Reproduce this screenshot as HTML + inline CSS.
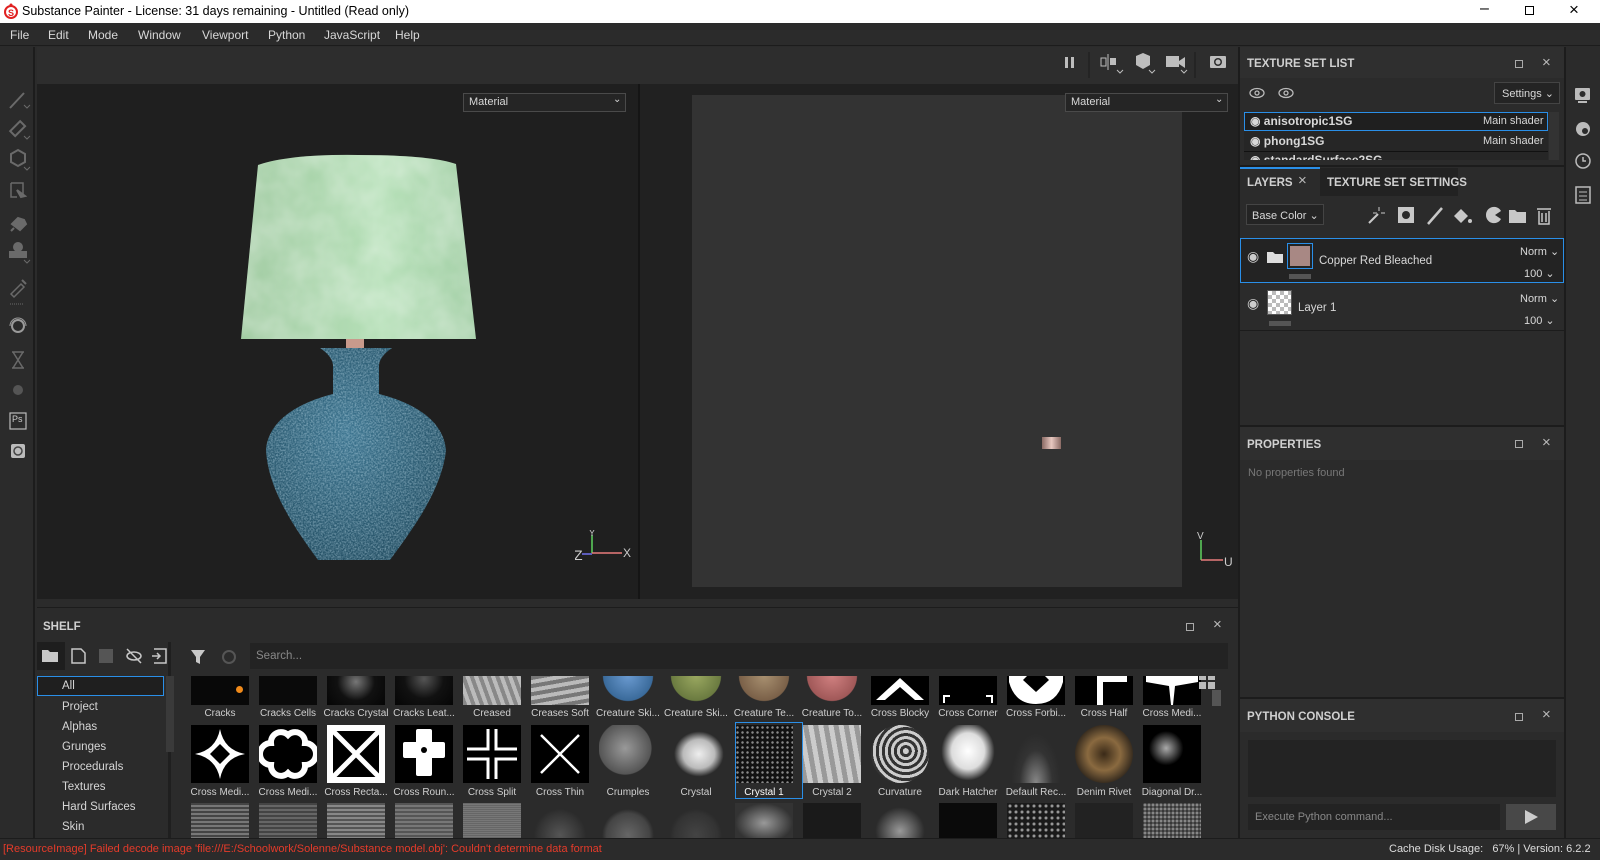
<!DOCTYPE html>
<html><head><meta charset="utf-8"><style>
*{margin:0;padding:0;box-sizing:border-box}
body{width:1600px;height:860px;overflow:hidden;background:#2b2b2b;font-family:"Liberation Sans",sans-serif;font-size:12px;color:#d8d8d8;position:relative}
.a{position:absolute}
.t{position:absolute;white-space:nowrap}
.hdr{font-weight:bold;color:#d0d0d0;font-size:11.5px}
.th{position:absolute;width:58px;overflow:hidden}
.lbl{position:absolute;width:68px;text-align:center;font-size:10px;color:#cfcfcf;white-space:nowrap;overflow:hidden}
.cat{position:absolute;left:62px;font-size:11.5px;color:#d6d6d6}
</style></head><body>
<!-- title bar -->
<div class="a" style="left:0;top:0;width:1600px;height:23px;background:#fff"></div>
<svg class="a" style="left:3px;top:3px" width="16" height="16"><circle cx="8" cy="9" r="6" fill="none" stroke="#e02020" stroke-width="2"/><text x="8" y="13" font-size="9" font-weight="bold" fill="#e02020" text-anchor="middle" font-family="Liberation Sans">S</text><circle cx="8" cy="2" r="1.5" fill="#e02020"/></svg>
<div class="t" style="left:22px;top:4px;color:#000;font-size:12.5px">Substance Painter - License: 31 days remaining - Untitled (Read only)</div>
<div class="t" style="left:1480px;top:0px;color:#000;font-size:16px">&#8211;</div>
<div class="a" style="left:1525px;top:6px;width:9px;height:9px;border:1px solid #000"></div>
<div class="t" style="left:1569px;top:0px;color:#000;font-size:17px">&#215;</div>
<!-- menu -->
<div class="a" style="left:0;top:23px;width:1600px;height:23px;background:#2b2b2b;border-bottom:1px solid #1c1c1c"></div>
<div class="t" style="left:10px;top:28px">File</div><div class="t" style="left:48px;top:28px">Edit</div><div class="t" style="left:88px;top:28px">Mode</div><div class="t" style="left:138px;top:28px">Window</div><div class="t" style="left:202px;top:28px">Viewport</div><div class="t" style="left:268px;top:28px">Python</div><div class="t" style="left:324px;top:28px">JavaScript</div><div class="t" style="left:395px;top:28px">Help</div>
<!-- left toolbar -->
<div class="a" style="left:0;top:47px;width:35px;height:791px;background:#2b2b2b;border-right:2px solid #1c1c1c"></div>
<svg class="a" style="left:0;top:47px" width="35" height="430" fill="none" stroke="#6a6a6a" stroke-width="2">
<line x1="10" y1="61" x2="24" y2="46"/><path d="M24 58l3 3 3-3" stroke-width="1"/>
<rect x="11" y="78" width="14" height="7" transform="rotate(-45 18 82)"/><path d="M24 89l3 3 3-3" stroke-width="1"/>
<path d="M11 107l7-4 7 4v8l-7 4-7-4z"/><path d="M24 120l3 3 3-3" stroke-width="1"/>
<path d="M11 136h12v12M11 136v14h6" stroke-width="1.5"/><path d="M17 143l8 6-4 1z" fill="#6a6a6a"/>
<path d="M12 177l6-6 6 2 2 4-6 6z" fill="#6a6a6a"/><line x1="11" y1="184" x2="14" y2="181"/>
<circle cx="18" cy="200" r="4" fill="#6a6a6a"/><rect x="10" y="205" width="16" height="5" fill="#6a6a6a"/><path d="M24 213l3 3 3-3" stroke-width="1"/>
<path d="M11 247l10-10 3 3-10 10z" stroke-width="1.5"/><line x1="22" y1="233" x2="26" y2="237"/>
<line x1="10" y1="257" x2="24" y2="257" stroke-width="1" stroke-dasharray="1 1"/>
<circle cx="18" cy="279" r="6" stroke="#9a9a9a"/><path d="M10 279a8 8 0 0 1 16 0" stroke="#9a9a9a" stroke-width="1"/>
<path d="M12 305h12M12 321h12M13 305l10 16M23 305l-10 16" stroke-width="1.5"/>
<circle cx="18" cy="343" r="5" fill="#555" stroke="none"/>
<rect x="10" y="366" width="16" height="16" stroke="#bbb" stroke-width="1.2"/>
<rect x="11" y="397" width="14" height="14" rx="2" fill="#bbb" stroke="none"/><circle cx="18" cy="404" r="4" stroke="#444" stroke-width="1.5"/>
</svg>
<div class="t" style="left:12px;top:414px;font-size:9px;color:#ccc">Ps</div>
<!-- viewport top bar -->
<div class="a" style="left:37px;top:47px;width:1201px;height:37px;background:#2d2d2d"></div>
<svg class="a" style="left:1055px;top:50px" width="180" height="30" fill="#bdbdbd">
<rect x="10" y="7" width="3" height="11"/><rect x="16" y="7" width="3" height="11"/>
<line x1="34" y1="2" x2="34" y2="28" stroke="#1c1c1c"/>
<rect x="46" y="8" width="5" height="8" fill="none" stroke="#bdbdbd"/><line x1="53" y1="4" x2="53" y2="20" stroke="#bdbdbd"/><rect x="55" y="8" width="6" height="7"/><path d="M62 20l3 3 3-3" fill="none" stroke="#bdbdbd"/>
<path d="M81 6l7-3 7 3v9l-7 4-7-4z"/><path d="M94 20l3 3 3-3" fill="none" stroke="#bdbdbd"/>
<rect x="111" y="6" width="13" height="11"/><path d="M124 11l6-4v11l-6-4z"/><path d="M126 20l3 3 3-3" fill="none" stroke="#bdbdbd"/>
<line x1="140" y1="2" x2="140" y2="28" stroke="#1c1c1c"/>
<rect x="155" y="6" width="16" height="12" rx="1"/><circle cx="163" cy="12" r="4" fill="#2d2d2d"/><circle cx="163" cy="12" r="2.5"/>
</svg>
<!-- 3D viewport -->
<div class="a" style="left:37px;top:84px;width:601px;height:515px;background:#1f1f1f"></div>
<div class="a" style="left:638px;top:84px;width:2px;height:515px;background:#151515"></div>
<div class="a" style="left:640px;top:84px;width:598px;height:515px;background:#212121"></div>
<div class="a" style="left:692px;top:95px;width:490px;height:492px;background:#333"></div>
<div class="a" style="left:1042px;top:437px;width:19px;height:12px;background:linear-gradient(90deg,#8a6a64,#e8c8c0,#8a6a64)"></div>
<div class="a" style="left:463px;top:93px;width:163px;height:19px;border:1px solid #4a4a4a;background:#252525"></div>
<div class="t" style="left:469px;top:96px;font-size:11px">Material</div><div class="t" style="left:613px;top:94px;font-size:10px">&#8964;</div>
<div class="a" style="left:1065px;top:93px;width:163px;height:19px;border:1px solid #4a4a4a;background:#252525"></div>
<div class="t" style="left:1071px;top:96px;font-size:11px">Material</div><div class="t" style="left:1215px;top:94px;font-size:10px">&#8964;</div>
<!-- lamp -->
<svg class="a" style="left:230px;top:150px" width="260" height="420">
<defs>
<filter id="n1"><feTurbulence type="fractalNoise" baseFrequency="0.03" numOctaves="3" seed="3"/><feColorMatrix values="0 0 0 0 1 0 0 0 0 1 0 0 0 0 1 0 0 0 0.5 -0.1"/><feComposite in2="SourceGraphic" operator="in"/></filter>
<filter id="n2"><feTurbulence type="fractalNoise" baseFrequency="0.6" numOctaves="2" seed="5"/><feColorMatrix values="0 0 0 0 0.6 0 0 0 0 0.8 0 0 0 0 0.9 0 0 0 0.9 -0.3"/><feComposite in2="SourceGraphic" operator="in"/></filter>
<linearGradient id="sg" x1="0" x2="1"><stop offset="0" stop-color="#9fcaa0"/><stop offset="0.6" stop-color="#b6e0b8"/><stop offset="1" stop-color="#a3cfa6"/></linearGradient>
<radialGradient id="vg" cx="0.45" cy="0.4" r="0.7"><stop offset="0" stop-color="#3d7590"/><stop offset="1" stop-color="#224c60"/></radialGradient>
</defs>
<path d="M28 15Q60 4 128 5Q200 5 226 14L246 189H11Z" fill="url(#sg)"/>
<path d="M28 15Q60 4 128 5Q200 5 226 14L246 189H11Z" fill="#fff" filter="url(#n1)"/>
<rect x="116" y="189" width="18" height="9" fill="#c89a8c"/>
<path id="vs" d="M90 198H162Q150 206 149 215V244C192 255 214 275 216 300C212 340 182 380 160 410H88C66 380 38 340 36 300C38 275 60 255 103 244V215Q102 206 90 198Z" fill="url(#vg)"/>
<path d="M90 198H162Q150 206 149 215V244C192 255 214 275 216 300C212 340 182 380 160 410H88C66 380 38 340 36 300C38 275 60 255 103 244V215Q102 206 90 198Z" fill="#fff" filter="url(#n2)"/>
</svg>
<!-- axes -->
<svg class="a" style="left:575px;top:530px" width="60" height="40"><line x1="17" y1="23" x2="17" y2="5" stroke="#5fd35f" stroke-width="1.5"/><line x1="17" y1="23" x2="47" y2="23" stroke="#e87c7c" stroke-width="1.5"/><line x1="7" y1="24" x2="17" y2="24" stroke="#7070ee" stroke-width="1.5"/><text x="14" y="6" fill="#ccc" font-size="9">Y</text><text x="48" y="27" fill="#ccc" font-size="12">X</text><text x="-1" y="30" fill="#ccc" font-size="14">Z</text></svg>
<svg class="a" style="left:1196px;top:530px" width="44" height="40"><line x1="5" y1="10" x2="5" y2="30" stroke="#5fd35f" stroke-width="1.5"/><line x1="5" y1="30" x2="27" y2="30" stroke="#e87c7c" stroke-width="1.5"/><text x="1" y="9" fill="#ccc" font-size="10">V</text><text x="28" y="36" fill="#ccc" font-size="12">U</text></svg>
<!-- shelf -->
<div class="a" style="left:37px;top:599px;width:1201px;height:9px;background:#2b2b2b;border-bottom:1px solid #1c1c1c"></div>
<div class="a" style="left:37px;top:609px;width:1201px;height:229px;background:#2b2b2b"></div>
<div class="t hdr" style="left:43px;top:621px">SHELF</div>
<div class="a" style="left:1186px;top:623px;width:8px;height:8px;border:1px solid #aaa"></div>
<div class="t" style="left:1213px;top:616px;font-size:15px;color:#bbb">&#215;</div>
<div class="a" style="left:37px;top:642px;width:130px;height:28px;background:#2b2b2b"></div>
<div class="a" style="left:37px;top:642px;width:28px;height:28px;background:#1e1e1e"></div>
<svg class="a" style="left:37px;top:642px" width="140" height="28" fill="#c8c8c8">
<path d="M5 8h6l2 2h8v10H5z"/>
<path d="M35 7h9l4 4v10H35z" fill="none" stroke="#c8c8c8" stroke-width="1.5"/>
<rect x="62" y="7" width="14" height="14" fill="#555"/>
<ellipse cx="97" cy="14" rx="7" ry="4" fill="none" stroke="#c8c8c8" stroke-width="1.5"/><line x1="90" y1="7" x2="104" y2="21" stroke="#c8c8c8" stroke-width="1.5"/>
<path d="M117 7h12v14h-12M115 14h8M120 11l3 3-3 3" fill="none" stroke="#c8c8c8" stroke-width="1.5"/>
</svg>
<div class="a" style="left:168px;top:642px;width:3px;height:196px;background:#1f1f1f"></div>
<svg class="a" style="left:188px;top:646px" width="60" height="22"><path d="M3 4h14l-5 7v7l-4-2v-5z" fill="#c8c8c8"/><circle cx="41" cy="11" r="6" fill="none" stroke="#555" stroke-width="2"/></svg>
<div class="a" style="left:250px;top:643px;width:978px;height:26px;background:#232323"></div>
<div class="t" style="left:256px;top:650px;color:#888;font-size:11.5px">Search...</div>
<!-- categories -->
<div class="a" style="left:37px;top:676px;width:127px;height:20px;background:#1f1f1f;border:1px solid #2a8fe8"></div>
<div class="a" style="left:166px;top:676px;width:8px;height:76px;background:#3a3a3a"></div>
<div class="cat" style="top:680px">All</div><div class="cat" style="top:701px">Project</div><div class="cat" style="top:721px">Alphas</div><div class="cat" style="top:741px">Grunges</div><div class="cat" style="top:761px">Procedurals</div><div class="cat" style="top:781px">Textures</div><div class="cat" style="top:801px">Hard Surfaces</div><div class="cat" style="top:821px">Skin</div>
<!-- thumbs -->
<div class="a" style="left:182px;top:676px;width:1040px;height:162px;overflow:hidden">
<div class="th" style="left:9px;top:0;height:29px;background:#080808"></div>
<div class="th" style="left:77px;top:0;height:29px;background:#0a0a0a"></div>
<div class="th" style="left:145px;top:0;height:29px;background:radial-gradient(circle at 50% 20%,#777,#111 50%,#050505)"></div>
<div class="th" style="left:213px;top:0;height:29px;background:radial-gradient(circle at 50% 10%,#555,#111 50%,#050505)"></div>
<div class="th" style="left:281px;top:0;height:29px;background:repeating-linear-gradient(70deg,#888 0 4px,#bbb 4px 8px)"></div>
<div class="th" style="left:349px;top:0;height:29px;background:repeating-linear-gradient(170deg,#777 0 4px,#bbb 4px 8px)"></div>
<div class="th" style="left:417px;top:0;height:29px;background:radial-gradient(ellipse at 50% 0%,#6a9ad0,#3a6a9a 60%,#2b2b2b 62%)"></div>
<div class="th" style="left:485px;top:0;height:29px;background:radial-gradient(ellipse at 50% 0%,#9aa860,#6a7a40 60%,#2b2b2b 62%)"></div>
<div class="th" style="left:553px;top:0;height:29px;background:radial-gradient(ellipse at 50% 0%,#a89070,#7a6048 60%,#2b2b2b 62%)"></div>
<div class="th" style="left:621px;top:0;height:29px;background:radial-gradient(ellipse at 50% 0%,#d08080,#a05858 60%,#2b2b2b 62%)"></div>
<div class="th" style="left:689px;top:0;height:29px;background:#000"><svg width="58" height="29"><path d="M5 24L29 2 53 24 44 24 29 11 14 24z" fill="#fff"/></svg></div>
<div class="th" style="left:757px;top:0;height:29px;background:#000"><svg width="58" height="29"><path d="M5 27v-7h6M53 27v-7h-6" stroke="#fff" stroke-width="2" fill="none"/></svg></div>
<div class="th" style="left:825px;top:0;height:29px;background:#000"><svg width="58" height="29"><path d="M2 0h54v6Q50 28 29 28Q8 28 2 6z" fill="#fff"/><path d="M16 4L29 16 42 4 38 0H20z" fill="#000"/></svg></div>
<div class="th" style="left:893px;top:0;height:29px;background:#000"><svg width="58" height="29"><path d="M22 0h30v6H28v23h-6z" fill="#fff"/></svg></div>
<div class="th" style="left:961px;top:0;height:29px;background:#000"><svg width="58" height="29"><path d="M3 0h52v6L32 10 30 29H28L26 10 3 6z" fill="#fff"/></svg></div>
<svg class="a" style="left:1016px;top:-4px" width="18" height="18" fill="#bbb"><rect x="1" y="1" width="7" height="7"/><rect x="10" y="1" width="7" height="7"/><rect x="1" y="10" width="7" height="7"/><rect x="10" y="10" width="7" height="7"/></svg>
<div class="a" style="left:1030px;top:14px;width:9px;height:16px;background:#555"></div>
<div class="a" style="left:54px;top:10px;width:7px;height:7px;border-radius:50%;background:#f08a1a"></div>
<div class="lbl" style="left:4px;top:32px">Cracks</div><div class="lbl" style="left:72px;top:32px">Cracks Cells</div><div class="lbl" style="left:140px;top:32px">Cracks Crystal</div><div class="lbl" style="left:208px;top:32px">Cracks Leat...</div><div class="lbl" style="left:276px;top:32px">Creased</div><div class="lbl" style="left:344px;top:32px">Creases Soft</div><div class="lbl" style="left:412px;top:32px">Creature Ski...</div><div class="lbl" style="left:480px;top:32px">Creature Ski...</div><div class="lbl" style="left:548px;top:32px">Creature Te...</div><div class="lbl" style="left:616px;top:32px">Creature To...</div><div class="lbl" style="left:684px;top:32px">Cross Blocky</div><div class="lbl" style="left:752px;top:32px">Cross Corner</div><div class="lbl" style="left:820px;top:32px">Cross Forbi...</div><div class="lbl" style="left:888px;top:32px">Cross Half</div><div class="lbl" style="left:956px;top:32px">Cross Medi...</div>
<div class="th" style="left:9px;top:49px;height:58px;background:#000"><svg width="58" height="58"><path d="M29 4Q33 25 54 29Q33 33 29 54Q25 33 4 29Q25 25 29 4z" fill="#fff"/><path d="M29 19L39 29 29 39 19 29z" fill="#000"/></svg></div>
<div class="th" style="left:77px;top:49px;height:58px;background:#000"><svg width="58" height="58"><path d="M29 10a10 10 0 0 1 17 8a10 10 0 0 1 0 22a10 10 0 0 1-17 8a10 10 0 0 1-17-8a10 10 0 0 1 0-22a10 10 0 0 1 17-8z" fill="none" stroke="#fff" stroke-width="6"/></svg></div>
<div class="th" style="left:145px;top:49px;height:58px;background:#000"><svg width="58" height="58"><rect x="3" y="3" width="52" height="52" fill="none" stroke="#fff" stroke-width="6"/><path d="M6 6L52 52M52 6L6 52" stroke="#fff" stroke-width="5"/></svg></div>
<div class="th" style="left:213px;top:49px;height:58px;background:#000"><svg width="58" height="58"><path d="M23 6h12v13h13v12H35v18H23V31H10V19h13z" fill="#fff" stroke="#fff" stroke-width="4" stroke-linejoin="round"/><circle cx="29" cy="25" r="3" fill="#000"/></svg></div>
<div class="th" style="left:281px;top:49px;height:58px;background:#000"><svg width="58" height="58" stroke="#fff" stroke-width="3" fill="none"><path d="M25 4v20H4M33 4v20h21M25 54V34H4M33 54V34h21"/></svg></div>
<div class="th" style="left:349px;top:49px;height:58px;background:#000"><svg width="58" height="58"><path d="M10 10L48 48M48 10L10 48" stroke="#fff" stroke-width="2.5"/></svg></div>
<div class="th" style="left:417px;top:49px;height:58px;background:radial-gradient(circle at 45% 40%,#999,#555 55%,#2b2b2b 57%)"></div>
<div class="th" style="left:485px;top:49px;height:58px;background:radial-gradient(ellipse at 55% 50%,#eee,#bbb 35%,#2b2b2b 55%)"></div>
<div class="th" style="left:553px;top:49px;height:58px;background:#111;background-image:radial-gradient(#888 1px,transparent 1.5px);background-size:5px 5px"></div>
<div class="th" style="left:621px;top:49px;height:58px;background:repeating-linear-gradient(80deg,#999 0 5px,#ccc 5px 10px)"></div>
<div class="th" style="left:689px;top:49px;height:58px;background:repeating-radial-gradient(circle at 60% 45%,#ccc 0 3px,#333 3px 6px);border-radius:50%"></div>
<div class="th" style="left:757px;top:49px;height:58px;background:radial-gradient(ellipse at 50% 45%,#fff,#ddd 40%,#2b2b2b 65%)"></div>
<div class="th" style="left:825px;top:49px;height:58px;background:radial-gradient(ellipse at 50% 100%,#888,#333 40%,#2b2b2b 60%)"></div>
<div class="th" style="left:893px;top:49px;height:58px;border-radius:50%;background:radial-gradient(circle at 50% 50%,#3a2a18,#8a6a40 40%,#3a2e20 70%)"></div>
<div class="th" style="left:961px;top:49px;height:58px;background:radial-gradient(ellipse at 40% 40%,#aaa,#000 35%)"></div>
<div class="a" style="left:553px;top:46px;width:68px;height:77px;border:1px solid #2a8fe8"></div>
<div class="lbl" style="left:4px;top:111px">Cross Medi...</div><div class="lbl" style="left:72px;top:111px">Cross Medi...</div><div class="lbl" style="left:140px;top:111px">Cross Recta...</div><div class="lbl" style="left:208px;top:111px">Cross Roun...</div><div class="lbl" style="left:276px;top:111px">Cross Split</div><div class="lbl" style="left:344px;top:111px">Cross Thin</div><div class="lbl" style="left:412px;top:111px">Crumples</div><div class="lbl" style="left:480px;top:111px">Crystal</div><div class="lbl" style="left:548px;top:111px;color:#fff">Crystal 1</div><div class="lbl" style="left:616px;top:111px">Crystal 2</div><div class="lbl" style="left:684px;top:111px">Curvature</div><div class="lbl" style="left:752px;top:111px">Dark Hatcher</div><div class="lbl" style="left:820px;top:111px">Default Rec...</div><div class="lbl" style="left:888px;top:111px">Denim Rivet</div><div class="lbl" style="left:956px;top:111px">Diagonal Dr...</div>
<div class="th" style="left:9px;top:127px;height:40px;background:repeating-linear-gradient(0deg,#777 0 2px,#444 2px 4px)"></div>
<div class="th" style="left:77px;top:127px;height:40px;background:repeating-linear-gradient(0deg,#666 0 2px,#444 2px 4px)"></div>
<div class="th" style="left:145px;top:127px;height:40px;background:repeating-linear-gradient(0deg,#888 0 2px,#555 2px 4px)"></div>
<div class="th" style="left:213px;top:127px;height:40px;background:repeating-linear-gradient(0deg,#777 0 2px,#555 2px 4px)"></div>
<div class="th" style="left:281px;top:127px;height:40px;background:repeating-linear-gradient(0deg,#777 0 1px,#666 1px 2px)"></div>
<div class="th" style="left:349px;top:127px;height:40px;background:radial-gradient(circle at 50% 80%,#555,#333 50%,#2b2b2b 60%)"></div>
<div class="th" style="left:417px;top:127px;height:40px;background:radial-gradient(circle at 50% 80%,#666,#444 50%,#2b2b2b 60%)"></div>
<div class="th" style="left:485px;top:127px;height:40px;background:radial-gradient(circle at 50% 80%,#444,#333 50%,#2b2b2b 60%)"></div>
<div class="th" style="left:553px;top:127px;height:40px;background:radial-gradient(ellipse,#999,#333 70%)"></div>
<div class="th" style="left:621px;top:127px;height:40px;background:#1a1a1a"></div>
<div class="th" style="left:689px;top:127px;height:40px;background:radial-gradient(ellipse at 50% 70%,#999,#2b2b2b 60%)"></div>
<div class="th" style="left:757px;top:127px;height:40px;background:#0a0a0a"></div>
<div class="th" style="left:825px;top:127px;height:40px;background:#1a1a1a;background-image:radial-gradient(#999 1px,transparent 2px);background-size:6px 6px"></div>
<div class="th" style="left:893px;top:127px;height:40px;background:#222"></div>
<div class="th" style="left:961px;top:127px;height:40px;background:#333;background-image:radial-gradient(#888 1px,transparent 2px);background-size:4px 4px"></div>
</div>
<!-- status bar -->
<div class="a" style="left:0;top:838px;width:1600px;height:22px;background:#2b2b2b;border-top:1px solid #1c1c1c"></div>
<div class="t" style="left:3px;top:843px;color:#e53b2a;font-size:11px">[ResourceImage] Failed decode image 'file:///E:/Schoolwork/Solenne/Substance model.obj': Couldn't determine data format</div>
<div class="t" style="left:1389px;top:843px;font-size:11px;color:#ddd">Cache Disk Usage:&nbsp;&nbsp; 67% | Version: 6.2.2</div>
<!-- right panel -->
<div class="a" style="left:1238px;top:47px;width:2px;height:791px;background:#1c1c1c"></div>
<div class="a" style="left:1240px;top:47px;width:324px;height:791px;background:#2b2b2b"></div>
<div class="a" style="left:1564px;top:47px;width:2px;height:791px;background:#1c1c1c"></div>
<div class="a" style="left:1240px;top:47px;width:324px;height:31px;background:#2f2f2f"></div>
<div class="t hdr" style="left:1247px;top:58px">TEXTURE SET LIST</div>
<div class="a" style="left:1515px;top:60px;width:8px;height:8px;border:1px solid #aaa"></div>
<div class="t" style="left:1542px;top:54px;font-size:15px;color:#bbb">&#215;</div>
<svg class="a" style="left:1248px;top:85px" width="60" height="16" fill="none" stroke="#bbb" stroke-width="1.3"><ellipse cx="9" cy="8" rx="7" ry="4.5"/><circle cx="9" cy="8" r="2"/><ellipse cx="38" cy="8" rx="7" ry="4.5"/><circle cx="38" cy="8" r="2"/></svg>
<div class="a" style="left:1494px;top:82px;width:66px;height:22px;border:1px solid #444;background:#242424"></div>
<div class="t" style="left:1502px;top:87px;font-size:11px">Settings &#8964;</div>
<div class="a" style="left:1244px;top:112px;width:304px;height:48px;background:#262626"></div>
<div class="a" style="left:1244px;top:112px;width:304px;height:19px;background:#1f1f1f;border:1px solid #2a8fe8"></div>
<div class="a" style="left:1244px;top:151px;width:304px;height:1px;background:#111"></div>
<div class="a" style="left:1549px;top:112px;width:10px;height:48px;background:#333"></div>
<div class="t" style="left:1250px;top:114px;font-weight:bold;font-size:12px">&#9673; anisotropic1SG</div>
<div class="t" style="left:1483px;top:115px;font-size:11px">Main shader</div>
<div class="t" style="left:1250px;top:134px;font-weight:bold;font-size:12px">&#9673; phong1SG</div>
<div class="t" style="left:1483px;top:135px;font-size:11px">Main shader</div>
<div class="a" style="left:1244px;top:154px;width:304px;height:6px;overflow:hidden"><div class="t" style="left:6px;top:-1px;font-weight:bold;font-size:12px">&#9673; standardSurface2SG</div></div>
<div class="a" style="left:1240px;top:165px;width:324px;height:2px;background:#1c1c1c"></div>
<div class="a" style="left:1240px;top:167px;width:80px;height:2px;background:#2a8fe8"></div>
<div class="a" style="left:1320px;top:168px;width:138px;height:28px;background:#222"></div>
<div class="t hdr" style="left:1247px;top:177px">LAYERS</div>
<div class="t" style="left:1298px;top:172px;font-size:15px;color:#bbb">&#215;</div>
<div class="t hdr" style="left:1327px;top:177px">TEXTURE SET SETTINGS</div>
<div class="a" style="left:1246px;top:204px;width:78px;height:21px;border:1px solid #444;background:#242424"></div>
<div class="t" style="left:1252px;top:209px;font-size:11px">Base Color &#8964;</div>
<svg class="a" style="left:1366px;top:204px" width="196" height="22" fill="#c8c8c8">
<path d="M3 19l9-9" stroke="#c8c8c8" stroke-width="2"/><path d="M13 3v4M11 9h-4M15 9h4" stroke="#c8c8c8"/>
<rect x="32" y="3" width="16" height="16"/><circle cx="40" cy="11" r="4" fill="#2b2b2b"/>
<path d="M62 20l14-16" stroke="#c8c8c8" stroke-width="2.5"/>
<path d="M88 12l7-7 7 7-7 7z"/><circle cx="104" cy="17" r="2"/>
<path d="M120 11a8 8 0 0 1 15-4l-6 4 6 4a8 8 0 0 1-15-4z"/>
<path d="M143 6h6l2 2h9v11h-17z"/>
<path d="M171 5h14M173 7v13h10V7M176 9v9M180 9v9" stroke="#c8c8c8" stroke-width="1.5" fill="none"/>
</svg>
<div class="a" style="left:1240px;top:238px;width:324px;height:45px;background:#232323;border:1px solid #2a8fe8"></div>
<div class="t" style="left:1247px;top:248px;font-size:14px;color:#ccc">&#9673;</div>
<svg class="a" style="left:1266px;top:250px" width="18" height="14"><path d="M1 2h6l2 2h8v9H1z" fill="#ddd"/></svg>
<div class="a" style="left:1287px;top:243px;width:26px;height:26px;border:1px solid #2a8fe8;padding:2px"><div style="width:100%;height:100%;background:#a88884"></div></div>
<div class="a" style="left:1289px;top:274px;width:22px;height:5px;background:#555"></div>
<div class="t" style="left:1319px;top:255px;font-size:11.5px">Copper Red Bleached</div>
<div class="t" style="left:1520px;top:245px;font-size:11px">Norm &#8964;</div>
<div class="t" style="left:1524px;top:267px;font-size:11px">100 &#8964;</div>
<div class="t" style="left:1247px;top:295px;font-size:14px;color:#ccc">&#9673;</div>
<div class="a" style="left:1267px;top:290px;width:25px;height:25px;border:1px solid #555;background:#fff;background-image:linear-gradient(45deg,#bbb 25%,transparent 25%,transparent 75%,#bbb 75%),linear-gradient(45deg,#bbb 25%,transparent 25%,transparent 75%,#bbb 75%);background-size:8px 8px;background-position:0 0,4px 4px"></div>
<div class="a" style="left:1269px;top:321px;width:22px;height:5px;background:#555"></div>
<div class="t" style="left:1298px;top:302px;font-size:11.5px">Layer 1</div>
<div class="t" style="left:1520px;top:292px;font-size:11px">Norm &#8964;</div>
<div class="t" style="left:1524px;top:314px;font-size:11px">100 &#8964;</div>
<div class="a" style="left:1240px;top:330px;width:324px;height:1px;background:#1c1c1c"></div>
<div class="a" style="left:1240px;top:425px;width:324px;height:2px;background:#1c1c1c"></div>
<div class="a" style="left:1240px;top:427px;width:324px;height:33px;background:#2f2f2f"></div>
<div class="t hdr" style="left:1247px;top:439px">PROPERTIES</div>
<div class="a" style="left:1515px;top:440px;width:8px;height:8px;border:1px solid #aaa"></div>
<div class="t" style="left:1542px;top:434px;font-size:15px;color:#bbb">&#215;</div>
<div class="t" style="left:1248px;top:467px;font-size:11px;color:#777">No properties found</div>
<div class="a" style="left:1240px;top:697px;width:324px;height:2px;background:#1c1c1c"></div>
<div class="a" style="left:1240px;top:699px;width:324px;height:33px;background:#2f2f2f"></div>
<div class="t hdr" style="left:1247px;top:711px">PYTHON CONSOLE</div>
<div class="a" style="left:1515px;top:713px;width:8px;height:8px;border:1px solid #aaa"></div>
<div class="t" style="left:1542px;top:706px;font-size:15px;color:#bbb">&#215;</div>
<div class="a" style="left:1248px;top:740px;width:308px;height:57px;background:#232323"></div>
<div class="a" style="left:1248px;top:804px;width:252px;height:26px;background:#232323"></div>
<div class="t" style="left:1255px;top:811px;font-size:11px;color:#888">Execute Python command...</div>
<div class="a" style="left:1506px;top:804px;width:50px;height:26px;background:#484848"></div>
<svg class="a" style="left:1523px;top:809px" width="16" height="16"><path d="M2 1l13 7-13 7z" fill="#ccc"/></svg>
<svg class="a" style="left:1572px;top:86px" width="22" height="120" fill="#bbb">
<rect x="3" y="2" width="15" height="12" rx="1"/><circle cx="10.5" cy="8" r="3" fill="#2b2b2b"/><rect x="6" y="15" width="9" height="2"/>
<circle cx="11" cy="43" r="7"/><circle cx="13" cy="45" r="3" fill="#2b2b2b"/>
<circle cx="11" cy="75" r="7" fill="none" stroke="#bbb" stroke-width="1.5"/><path d="M11 71v4h3" stroke="#bbb" fill="none" stroke-width="1.5"/>
<rect x="4" y="101" width="14" height="16" fill="none" stroke="#bbb" stroke-width="1.5"/><path d="M7 106h8M7 110h8M7 114h8" stroke="#bbb"/>
</svg>
</body></html>
